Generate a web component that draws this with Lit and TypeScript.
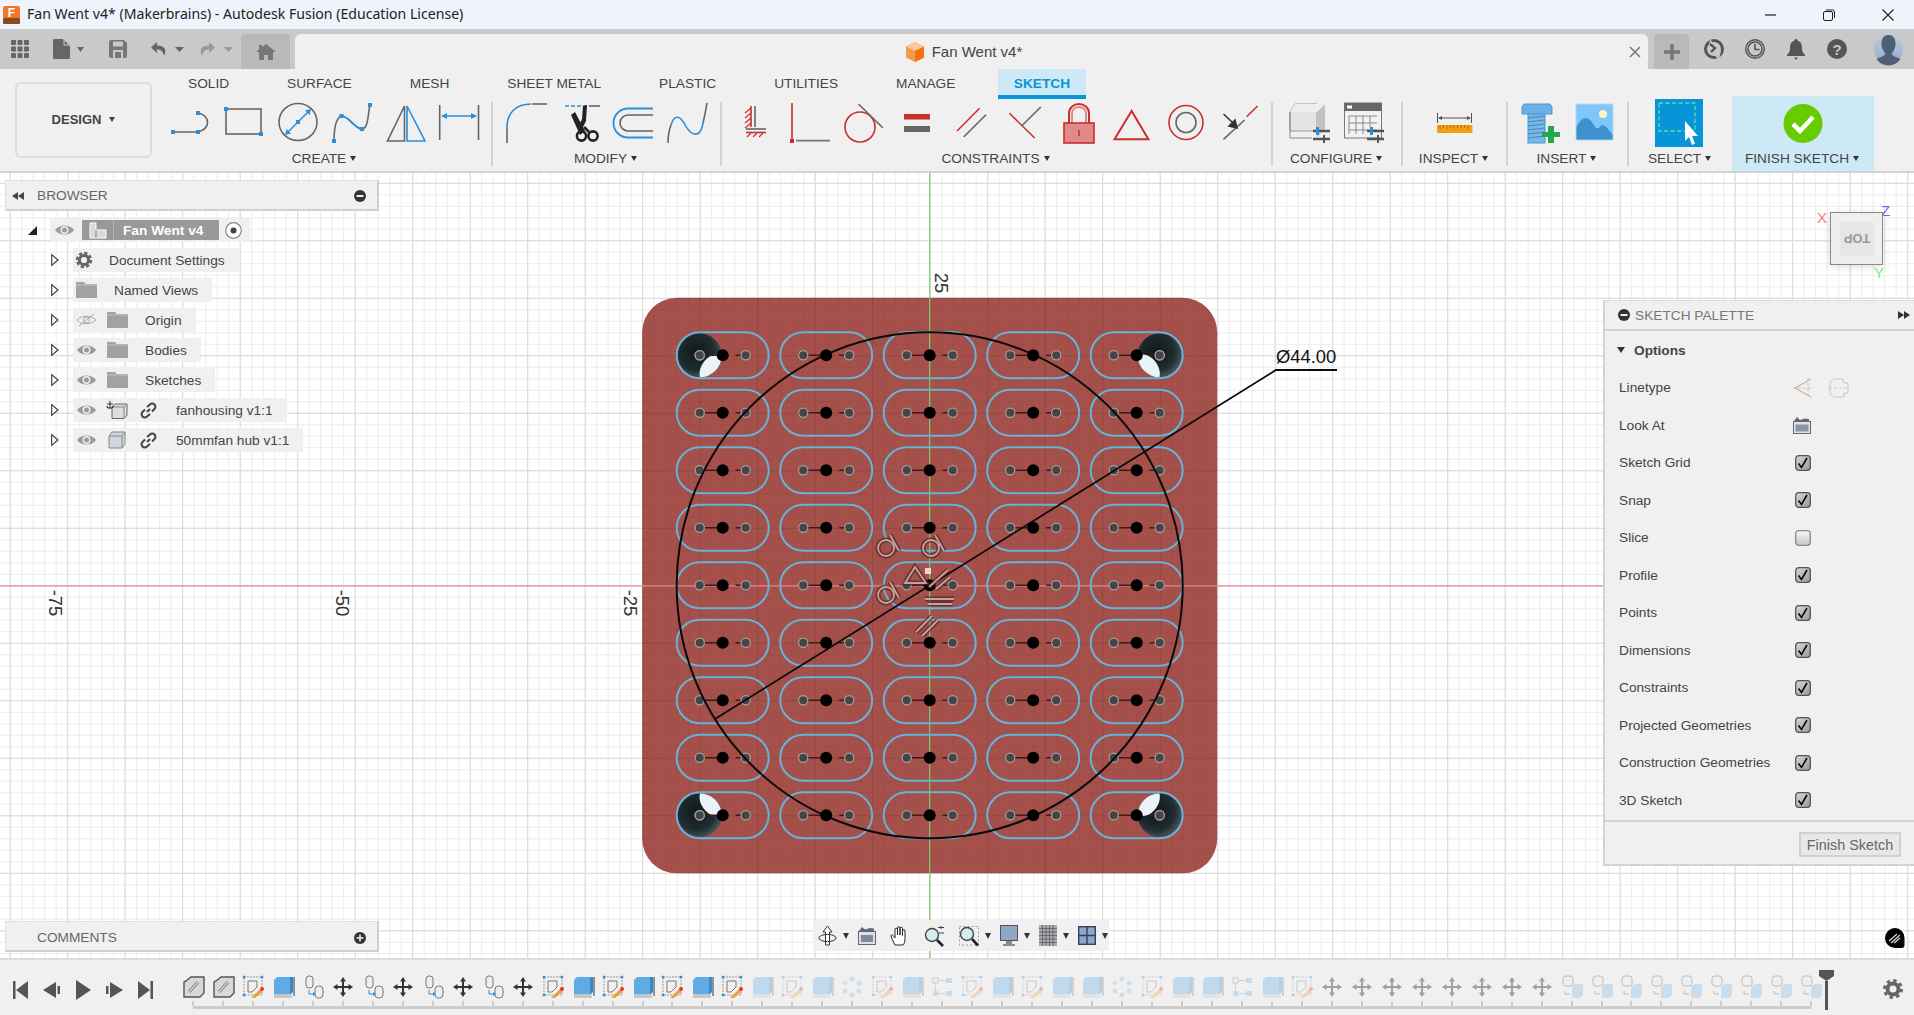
import { LitElement, html, svg, css } from 'lit';
import { customElement } from 'lit/decorators.js';

const GREY = '#666';
const BLUE = '#2a8fdc';
const RED = '#c9302c';

// 40x40 ribbon icons, drawn against the box they sit in
const sq = (x: number, y: number, c = BLUE, s = 4) => svg`<rect x=${x - s / 2} y=${y - s / 2} width=${s} height=${s} fill=${c}/>`;
const ln = (d: string, c = GREY, w = 1.6) => svg`<path d=${d} fill="none" stroke=${c} stroke-width=${w}/>`;

const ICONS: Record<string, any> = {
    line: svg`${ln('M2 29H27A13 10 0 0 0 27 9.7')}${sq(2, 29)}${sq(27, 29)}${sq(27, 10)}`,
    rect: svg`<rect x="2" y="6" width="35" height="25" fill="none" stroke=${GREY} stroke-width="1.6"/>${sq(2, 6)}${sq(37, 31)}`,
    circle: svg`<ellipse cx="20" cy="19" rx="19" ry="18.5" fill="none" stroke=${GREY} stroke-width="1.6"/>${ln('M10 29L30 9', BLUE)}
        <path d="M7 32l1.5-6 4.5 4.5zM33 6l-1.5 6-4.5-4.5z" fill=${BLUE}/>${sq(20, 19)}`,
    spline: svg`${ln('M2 38C2 25 4 15 9.5 13C16 12 23 26 30 26C36 26 36 12 38 1')}${ln('M9.5 13C16 12 23 26 30 26', BLUE)}${sq(2, 38)}${sq(9.5, 13)}${sq(30, 26)}${sq(38, 2)}`,
    mirror: svg`${ln('M18.5 3L1.5 38H18.5Z')}${ln('M21 3L39 38H21Z', BLUE)}`,
    dim: svg`${ln('M.7 2V37M39.5 2V37')}${ln('M3 13H37', BLUE)}<path d="M2 13l6-3v6zM38 13l-6-3v6z" fill=${BLUE}/>`,
    fillet: svg`${ln('M1 24V40')}${ln('M26 1H41')}${ln('M1 24C1 10 10 1 25 1', BLUE)}`,
    scissors: svg`<path d="M5 3H27" stroke=${BLUE} stroke-width="1.4" stroke-dasharray="4 2" fill="none"/>${ln('M29 3H40')}
        <path d="M11 12L15 9L25 28L20 32ZM23 3L27 2L26 18L21 28L18 25L22 16Z" fill="#222"/>
        <circle cx="21.5" cy="33" r="4.6" fill="none" stroke="#222" stroke-width="2.6"/><circle cx="33" cy="33" r="4.6" fill="none" stroke="#222" stroke-width="2.6"/>
        <path d="M24 24L29 29" stroke="#222" stroke-width="2.6"/>`,
    offset: svg`${ln('M40 5.5H15A14.5 14.5 0 0 0 15 34.5H40', BLUE, 1.8)}${ln('M40 12H15A8 8 0 0 0 15 28H40')}`,
    spline2: svg`${ln('M1 40C1 32 2 27 4 22M36 20C38 12 39 5 40 0')}${ln('M4 22C7 12 12 12 17 20C21 28 25 32 30 31C33 30 35 26 36 20', BLUE)}`,
    fix: svg`${ln('M15 3V24', RED)}${ln('M19 3V24')}${ln('M10 26H30')}${ln('M10 29.5H30', RED)}
        ${ln('M9 10L15 5M9 15L15 10M9 20L15 15M9 25L15 20M11 34L15 30M17 34L21 30M23 34L27 30', RED, 1.2)}`,
    coincident: svg`${ln('M2 0V36', RED)}${sq(2, 38, RED)}${ln('M6 37.6H40', '#777', 1.8)}`,
    tangent: svg`<circle cx="16" cy="24" r="15" fill="none" stroke=${RED} stroke-width="1.6"/>${ln('M14.5 1L39 25')}`,
    equal: svg`<rect x="7" y="11" width="26" height="5.5" fill=${RED}/><rect x="7" y="23" width="26" height="6" fill=${GREY}/>`,
    parallel: svg`${ln('M6 28L28.6 5.3', RED)}${ln('M12.7 34L35 11.7')}`,
    perp: svg`${ln('M4.4 10.3L29.7 35', RED)}${ln('M16.6 23L35.8 4')}`,
    lock: svg`<path d="M10 20V10A10 9 0 0 1 30 10V20" fill="none" stroke=${RED} stroke-width="2"/><path d="M13 20V10A7 6 0 0 1 27 10V20" fill="none" stroke="#e08a8a" stroke-width="2"/>
        <rect x="5" y="20" width="30" height="20" fill="#e08a8a" stroke=${RED} stroke-width="1.6"/><path d="M20 27V33" stroke="#a33" stroke-width="1.4"/>`,
    triangle: svg`<path d="M19.6 8L2.5 36.3H36.4Z" fill="none" stroke=${RED} stroke-width="2"/>`,
    concentric: svg`<circle cx="20" cy="19.5" r="17" fill="none" stroke=${RED} stroke-width="1.6"/><circle cx="20" cy="19.5" r="10" fill="none" stroke=${GREY} stroke-width="1.6"/>`,
    midpoint: svg`${ln('M3.4 36.3L24.6 17')}${ln('M26.6 13.7L37.6 3', RED)}<path d="M3.5 11L12 19M17 25L9 23L15 17Z" stroke="#333" stroke-width="1.6" fill="#333"/>`,
    cube: svg`<path d="M0 9L5 1H27V28H0Z" fill="#e4e4e4" stroke="#999"/><path d="M27 1H35V4V26L27 34Z" fill="#c2c2c2"/><path d="M0 9H27L35 1H5Z" fill="#eee"/><path d="M0 9V35H22" fill="none" stroke="#888"/>
        <path d="M23 28H40M23 36H40" stroke="#555" stroke-width="2.6"/><rect x="26" y="24" width="3" height="8" fill=${BLUE}/><rect x="33" y="32" width="2" height="8" fill="#555"/>`,
    table: svg`<rect x=".5" y="0" width="37" height="35" fill="#f2f2f2" stroke="#777"/><rect x=".5" y="0" width="37" height="8" fill="#666"/><rect x="3" y="2.5" width="5" height="3" fill="#fff"/>
        ${ln('M5 13H33M5 20H33M5 27H33M5 13V31M12 13V31M19 13V31M26 13V24', '#888', 1)}
        <path d="M23 28H40M23 36H40" stroke="#555" stroke-width="2.6"/><rect x="26" y="24" width="3" height="8" fill=${BLUE}/><rect x="33" y="32" width="2" height="8" fill="#555"/>`,
    ruler: svg`<rect x="2" y="22" width="35.5" height="8" fill="#f0a010"/>${ln('M5 22V26M8.5 22V25M12 22V26M15.5 22V25M19 22V26M22.5 22V25M26 22V26M29.5 22V25M33 22V26', '#b87000', 1)}
        ${ln('M2.5 10V20M36.5 10V20', '#555', 1)}${ln('M4 15H35', '#555', 1)}<path d="M3 15l4-2v4zM36 15l-4-2v4z" fill="#555"/>`,
    bolt: svg`<path d="M3 1H29L31 4V11H1V4Z" fill="#6db1e6" stroke="#4b97d2"/><rect x="7" y="11" width="17" height="29" fill="#79b7e6" stroke="#4b97d2"/>
        ${ln('M7 15L24 13M7 19L24 17M7 23L24 21M7 27L24 25M7 31L24 29M7 35L24 33', '#3f88c4', 1.2)}<path d="M27 23H33V29H39V34H33V40H27V34H21V29H27Z" fill="#22a84f"/>`,
    image: svg`<rect x="2" y="1" width="37" height="36" fill="#80c6f8" stroke="#b6daf4"/><path d="M2.5 36.5V24C7 15 12 12 17 18C20 22 22 27 25 25C28 20 32 22 38.5 32V36.5Z" fill="#3d91cd"/><circle cx="29" cy="11" r="4" fill="#fdf4c2"/>`,
    check: svg`<ellipse cx="20" cy="19.5" rx="19.5" ry="19.5" fill="#66cc00"/><path d="M10 20L17 27L30 13" fill="none" stroke="#fff" stroke-width="4.6"/>`,
};

const TOOLS: [string, string[], number][] = [
    ['CREATE', ['line', 'rect', 'circle', 'spline', 'mirror', 'dim'], 334],
    ['MODIFY', ['fillet', 'scissors', 'offset', 'spline2'], 229],
    ['CONSTRAINTS', ['fix', 'coincident', 'tangent', 'equal', 'parallel', 'perp', 'lock', 'triangle', 'concentric', 'midpoint'], 551],
    ['CONFIGURE', ['cube', 'table'], 130],
    ['INSPECT', ['ruler'], 105],
    ['INSERT', ['bolt', 'image'], 121],
];

const PALETTE: [string, boolean][] = [
    ['Sketch Grid', true], ['Snap', true], ['Slice', false], ['Profile', true], ['Points', true], ['Dimensions', true],
    ['Constraints', true], ['Projected Geometries', true], ['Construction Geometries', true], ['3D Sketch', true],
];

// timeline: L link, S sketch, E extrude, J joint, M move; lower case is past the marker, c and r are patterns
const SEQ = 'LLSEJMJMJMJMSESESES' + 'esecsersesee' + 'csee' + 'res' + 'mmmmmmmm' + 'jjjjjjjjj';

const tlIcon = (k: string): any => {
    if (k === 'L') return svg`<path d="M5 5L10 1H23V17L19 21H3V6Z" fill="#d8d8d8" stroke="#555" stroke-width="1.4"/><path d="M8 16L17 6" stroke="#777" stroke-width="3" fill="none"/><path d="M8 16L17 6" stroke="#ddd" stroke-width="1.2"/>`;
    if (k === 'J') return svg`<rect x="5" y="0" width="7" height="12" rx="3" fill="#eee" stroke="#777"/><rect x="14" y="10" width="8" height="12" rx="3.5" fill="#eee" stroke="#777"/><path d="M8 14V18H13" stroke=${BLUE} fill="none"/><path d="M15 18l-3-2v4z" fill=${BLUE}/>`;
    if (k === 'M') return svg`<path d="M12 1L15 5.5H13V10H17.5V8L22 11L17.5 14V12H13V16.5H15L12 21L9 16.5H11V12H6.5V14L2 11L6.5 8V10H11V5.5H9Z" fill="#333"/>`;
    if (k === 'S') return svg`<rect x="3" y="1" width="18" height="18" fill="none" stroke="#999" stroke-dasharray="2 1"/>${sq(3, 1, BLUE, 2.4)}${sq(21, 1, BLUE, 2.4)}${sq(3, 19, BLUE, 2.4)}
        <path d="M7 5H16V11L11 16H7Z" fill="none" stroke="#777"/><path d="M11 21L19 13L22 15L14 22L10 22Z" fill="#e9a23b"/><circle cx="21" cy="13" r="2" fill="#e8342e"/>`;
    if (k === 'E') return svg`<path d="M3 4L6 1H19V18H3Z" fill="#5fabe4"/><path d="M19 1L22 1V16L19 19Z" fill="#3d88c6"/><path d="M3 18H19L21 20V22H3Z" fill="#c7c7c7"/><path d="M23 20V1" stroke="#333"/>`;
    if (k === 'c') return svg`<g fill="#8cbde3"><circle cx="12" cy="3" r="2.5"/><circle cx="19" cy="7" r="2.5"/><circle cx="19" cy="15" r="2.5"/><circle cx="12" cy="19" r="2.5"/><circle cx="5" cy="7" r="1.5" fill="none" stroke="#888"/><circle cx="5" cy="15" r="2.5"/></g>`;
    if (k === 'r') return svg`<rect x="3" y="2" width="5" height="5" fill="none" stroke="#888"/><rect x="16" y="2" width="6" height="5" fill="#6db1e6"/><rect x="3" y="15" width="5" height="5" fill="#6db1e6"/><rect x="16" y="15" width="6" height="5" fill="#6db1e6"/><path d="M8 4.5H16M5.5 7V15M8 17.5H16" stroke="#999" fill="none"/>`;
    if (k === 'j') return svg`<rect x="3" y="0" width="10" height="10" rx="3" fill="#eee" stroke="#555"/><path d="M5 15V18H10" stroke="#555" fill="none"/><path d="M15 8H23V19L20 22H12V11Z" fill="#7fb6e0"/>`;
    return tlIcon(k.toUpperCase());
};

const slot = (x: number, y: number) => svg`
    <rect x=${x - 46} y=${y - 23} width="92" height="46" rx="23" fill="none" stroke="#66b4da" stroke-width="2"/>
    <path d="M${x - 20} ${y}H${x}M${x + 13} ${y}H${x + 19}" stroke="#3d1c1a" stroke-width="1.4" fill="none"/>
    <circle cx=${x - 23} cy=${y} r="4.6" fill="#454545" stroke="#a3a3a3" stroke-width="1.2"/>
    <circle cx=${x + 23} cy=${y} r="4.6" fill="#454545" stroke="#a3a3a3" stroke-width="1.2"/>`;

// the four screw holes, highlight turned towards the middle of the plate
const hole = (x: number, y: number, sx: number, sy: number, id: string) => svg`
    <clipPath id=${id}><circle cx=${x} cy=${y} r="22"/></clipPath>
    <circle cx=${x} cy=${y} r="22" fill="url(#ball)"/>
    <g clip-path="url(#${id})">
        <ellipse cx=${x + 13 * sx} cy=${y + 14 * sy} rx="11.5" ry="16" fill="#eaf3f7" transform=${`rotate(${sx * sy * 35} ${x + 13 * sx} ${y + 14 * sy})`}/>
    </g>
    <circle cx=${x} cy=${y} r="4.6" fill="#454545" stroke="#a3a3a3" stroke-width="1.2"/>`;

const glyph = (d: string) => svg`<path d=${d} fill="none" stroke="#4a2826" stroke-width="5" opacity=".7"/><path d=${d} fill="none" stroke="#d8aaa5" stroke-width="1.8" opacity=".9"/>`;

const eye = (off = false) => html`<svg class="ic21" width="21" height="14" viewBox="0 0 21 14">
    ${off
        ? svg`<path d="M1 7C5 2 15 2 20 7C15 12 5 12 1 7Z" fill="none" stroke="#aaa"/><circle cx="10.5" cy="7" r="3" fill="none" stroke="#aaa"/><path d="M3 13L18 1" stroke="#aaa"/>`
        : svg`<path d="M1 7C5 1 16 1 20 7C16 13 5 13 1 7Z" fill="#9a9a9a"/><circle cx="10.5" cy="7" r="4" fill="#f0f0f0"/><circle cx="10.5" cy="7" r="2.5" fill="#9a9a9a"/>`}
</svg>`;
const folder = () => html`<svg class="ic21" width="21" height="16" viewBox="0 0 21 16"><path d="M0 0H8L9.5 2H21V16H0Z" fill="#a2a2a2"/><path d="M0 3H21" stroke="#ddd" stroke-width=".6"/></svg>`;
const link = () => html`<svg class="ic-link" width="17" height="17" viewBox="0 0 17 17"><path d="M7 10L10 7" stroke="#444" stroke-width="2"/><path d="M7 5L10 2.5A3 3 0 0 1 14.5 7L12 9.5M10 12L7 14.5A3 3 0 0 1 2.5 10L5 7.5" fill="none" stroke="#444" stroke-width="2"/></svg>`;
const chev = () => html`<svg class="chev" width="8" height="12" viewBox="0 0 8 12"><path d="M.7 .7L7 6L.7 11.3Z" fill="#fff" stroke="#333" stroke-width="1.1"/></svg>`;

@customElement('app-root')
export class AppRoot extends LitElement {
    static styles = css`
        :host {
            display: flex;
            flex-direction: column;
            width: 1914px;
            height: 1015px;
            overflow: hidden;
            font-family: "Liberation Sans", Arial, sans-serif;
            font-size: 13.7px;
            color: #444;
            background: #fff;
        }
        svg { display: block; flex: none; overflow: visible; }

        .titlebar { display: flex; align-items: center; height: 29px; background: #eff3fb; padding-left: 3px; }
        .titlebar .name { margin: -2px 0 0 7px; font-family: "Noto Sans", sans-serif; font-size: 14.1px; color: #222; }
        .winbtns { display: flex; align-items: center; margin-left: auto; margin-right: 20px; gap: 47px; }

        .tabbar { display: flex; align-items: flex-end; height: 40px; background: #c9c9c9; }
        .tabbar > svg { align-self: center; }
        .tabbar .m5 { margin-left: 5px; } .tabbar .m6 { margin-left: 6px; } .tabbar .m7 { margin-left: 7px; }
        .tabbar .m8 { margin-left: 8px; } .tabbar .m9 { margin-left: 9px; } .tabbar .m11 { margin-left: 11px; }
        .tabbar .m15 { margin-left: 15px; } .tabbar .m21 { margin-left: 21px; } .tabbar .m22 { margin-left: 22px; }
        .tabbar .m24 { margin-left: 24px; } .tabbar .m25 { margin-left: 25px; } .tabbar .m27 { margin-left: 27px; }
        .home, .plus { display: flex; align-items: center; justify-content: center; height: 35px; background: #b9b9b9; border-radius: 4px 4px 0 0; }
        .home { width: 49px; } .plus { width: 35px; }
        .doctab {
            display: grid; grid-template-columns: 1fr auto 1fr; align-items: center;
            width: 1353px; height: 35px; box-sizing: border-box; padding-right: 15px;
            background: #f0f0f0; border-radius: 6px 6px 0 0;
        }
        .doctab .center { grid-column: 2; display: flex; align-items: center; gap: 8px; font-size: 15px; }
        .doctab .x { justify-self: end; margin-right: -8px; }

        .ribbon { display: flex; height: 102px; background: #f0f0f0; border-bottom: 2px solid #d2d2d2; }
        .design {
            display: flex; align-items: center; justify-content: center; gap: 8px;
            width: 137px; height: 76px; box-sizing: border-box; margin: 13px 7px 0 15px; padding-bottom: 2px;
            border: 2px solid #dcdcdc; border-radius: 6px; font-weight: bold; font-size: 13px;
        }
        .caret { width: 0; height: 0; border: 3.5px solid transparent; border-top: 5px solid #444; border-bottom: 0; flex: none; }
        .tabs { display: flex; height: 29px; padding-left: 29px; gap: 58px; align-items: flex-start; }
        .tabs span { line-height: 29px; white-space: nowrap; }
        .tabs .active {
            margin-left: -15.6px; padding: 0 16px; height: 29.5px; box-sizing: border-box;
            background: #cce9f5; border-bottom: 4px solid #0696d7; color: #0696d7; font-weight: bold;
        }
        .groups { display: flex; margin-top: 4px; height: 64px; }
        .group {
            display: flex; flex-direction: column; align-items: center; box-sizing: border-box;
            height: 64px; border-right: 2px solid #d2d2d2;
        }
        .group:nth-child(3) { padding-left: 3px; }
        .icons { display: flex; gap: 13.7px; height: 40px; margin-top: 1px; }
        .label { display: flex; align-items: center; gap: 4px; height: 16px; margin: 7px 2px 0 0; white-space: nowrap; }
        .group:nth-child(3) .label { margin-left: -3px; }
        .label .caret { border-top-color: #333; }
        .select { width: 103px; border-right: 0; }
        .select .icons { margin: -3px 0 0 -3px; height: 48px; }
        .select .label { margin-top: 3px; }
        .finish { width: 142px; height: 75px; margin-top: -6px; padding-top: 7px; border-right: 0; background: #cce9f5; }
        .finish .icons { margin-top: 1px; }
        .finish .label { margin-top: 6px; }

        .canvas { position: relative; flex: 1; min-height: 0; background: #fff; overflow: hidden; }
        .canvas > .scene { position: absolute; left: 0; top: 0; }

        .panel {
            display: flex; align-items: center; box-sizing: border-box; height: 31px; width: 374px; padding-top: 1px;
            background: #f0f0f0; border: 1px solid #dedede; border-right: 2px solid #cfcfcf; border-bottom: 2px solid #cfcfcf;
            color: #666;
        }
        .browser { position: absolute; left: 5px; top: 7px; }
        .browser .panel svg:first-child { margin-left: 6px; }
        .browser .panel span { margin-left: 13px; }
        .end { margin-left: auto; margin-right: 11px; }
        .tree { padding-top: 7px; }
        .row { display: flex; align-items: center; height: 24px; margin-bottom: 6px; padding-left: 46px; }
        .chev { margin-right: 14px; }
        .pill { display: flex; align-items: center; height: 24px; padding: 0 14px 0 3px; background: #f0f0f0; white-space: nowrap; }
        .ic21 { width: 21px; }
        .ic21 + .ic21 { margin-left: 10px; }
        .ic-link { margin-left: 12px; }
        .pill .txt { margin-left: 17px; }
        .pill .ic-link + .txt { margin-left: 19px; }
        .root { padding-left: 23px; }
        .root .rootchev { margin-right: 13px; }
        .root .pill { width: 200px; box-sizing: border-box; padding: 0 0 0 4px; }
        .selblock { display: flex; align-items: center; width: 137px; height: 20px; margin-left: 7px; background: #999; color: #fff; font-weight: bold; }
        .selblock .cell { display: flex; align-items: center; justify-content: center; width: 31px; height: 20px; border-right: 1px solid #b5b5b5; }
        .selblock span { margin-left: 9px; }
        .radio { margin-left: 6px; }

        .comments { position: absolute; left: 5px; top: 748px; padding-top: 3px; }
        .comments span { margin-left: 31px; }

        .palette {
            position: absolute; left: 1603px; top: 127px; width: 311px; height: 566px; box-sizing: border-box;
            background: #f0f0f0; border-left: 2px solid #d2d2d2; border-top: 1px solid #d8d8d8; border-bottom: 2px solid #d2d2d2;
        }
        .phead { display: flex; align-items: center; height: 30px; border-bottom: 2px solid #d2d2d2; color: #777; padding-left: 13px; box-sizing: border-box; }
        .phead span { margin-left: 5px; }
        .phead .end { margin-right: 4px; }
        .opts { display: flex; align-items: center; height: 38px; padding-left: 12px; font-weight: bold; gap: 9px; }
        .opts .caret { border-width: 6px 4px 0; border-top-color: #333; }
        .prow { display: grid; grid-template-columns: 160px auto auto; justify-content: start; align-items: center; height: 37.5px; padding-left: 14px; column-gap: 16px; }
        .prow span { white-space: nowrap; }
        .prow .nudge { margin-left: -2px; }
        .pfoot { display: flex; justify-content: flex-end; margin-top: 1px; padding-top: 10px; border-top: 2px solid #d2d2d2; padding-right: 13px; }
        .pfoot div { display: flex; align-items: center; justify-content: center; width: 102px; height: 25px; box-sizing: border-box; background: #e8e8e8; border: 2px solid #d0d0d0; color: #666; font-size: 14.4px; }

        .cube { position: absolute; left: 1830px; top: 39px; width: 53px; height: 53px; box-sizing: border-box; background: #efefef; border: 1px solid #888; display: flex; align-items: center; justify-content: center; box-shadow: 0 2px 8px rgba(0, 0, 0, .12); }
        .cube div { width: 34px; height: 34px; background: #e6e6e6; display: flex; align-items: center; justify-content: center; font-size: 13px; font-weight: bold; color: #999; transform: rotate(180deg); }
        .axis { position: absolute; font-size: 15px; line-height: 15px; }
        .axis.ax { left: 1817px; top: 37px; color: #f47f85; }
        .axis.az { left: 1881px; top: 30px; color: #6a6cf0; }
        .axis.ay { left: 1874px; top: 92px; color: #84e884; }

        .nav {
            position: absolute; left: 813px; top: 747px; width: 296px; height: 31px; box-sizing: border-box; padding-left: 5px;
            display: flex; align-items: center; background: #f0f0f0;
        }
        .nav .caret { border-width: 6px 3.5px 0; border-top-color: #333; margin-left: 6px; }
        .nav svg { margin-left: 14px; }
        .nav svg:first-child { margin-left: 0; }
        .nav .caret + svg { margin-left: 9px; }
        .drop { position: absolute; left: 1885px; top: 755px; }

        .timeline {
            display: flex; align-items: flex-start; height: 57px; box-sizing: border-box; background: #f0f0f0;
            border-top: 2px solid #dcdcdc;
        }
        .transport { display: flex; align-items: center; gap: 15.3px; width: 178px; height: 22px; padding-left: 13px; margin-top: 19px; flex: none; box-sizing: border-box; }
        .track { display: flex; flex: none; padding-top: 16px; }
        .item { display: flex; flex-direction: column; align-items: center; width: 29.98px; }
        .item.faded svg { opacity: .32; }
        .item.greyed svg { opacity: .42; }
        .tick { width: 2px; height: 5px; margin-top: 3px; background: #ccc; }
        .rail { align-self: stretch; height: 3px; background: #ccc; }
        .item:first-child .rail { margin-left: 50%; }
        .item:last-child .rail { margin-right: 50%; }
        .playhead { display: flex; flex-direction: column; align-items: center; flex: none; width: 15px; margin: 10px 0 0 -7px; }
        .playhead i { display: block; width: 3px; height: 29px; background: #555; }
        .gear { margin-left: auto; margin-right: 11px; margin-top: 19px; }
    `;

    render() {
        const rows = [];
        const dots = [];
        for (let r = -4; r <= 4; r++) {
            for (let c = -2; c <= 2; c++) {
                const x = 929.7 + c * 103.5;
                const y = 585.3 + r * 57.5;
                rows.push(slot(x, y));
                dots.push(svg`<circle cx=${x} cy=${y} r="6" fill="#000"/>`);
            }
        }
        const scene = html`<svg class="scene" width="1914" height="785" viewBox="0 173 1914 785">
            <defs>
                <pattern id="minor" patternUnits="userSpaceOnUse" x="929.7" y="585.3" width="11.5" height="11.5">
                    <path d="M0 0H11.5M0 0V11.5" stroke="#ebebeb" stroke-width="2" fill="none"/>
                </pattern>
                <pattern id="major" patternUnits="userSpaceOnUse" x="929.7" y="585.3" width="57.5" height="57.5">
                    <path d="M0 0H57.5M0 0V57.5" stroke="#dadada" stroke-width="2" fill="none"/>
                </pattern>
                <pattern id="pminor" patternUnits="userSpaceOnUse" x="929.7" y="585.3" width="11.5" height="11.5">
                    <path d="M0 0H11.5M0 0V11.5" stroke="#000" stroke-opacity=".05" stroke-width="1.5" fill="none"/>
                </pattern>
                <pattern id="pmajor" patternUnits="userSpaceOnUse" x="929.7" y="585.3" width="57.5" height="57.5">
                    <path d="M0 0H57.5M0 0V57.5" stroke="#000" stroke-opacity=".09" stroke-width="1.5" fill="none"/>
                </pattern>
                <radialGradient id="ball" cx=".42" cy=".42" r=".6">
                    <stop offset="0" stop-color="#10181b"/><stop offset=".7" stop-color="#1f2c30"/><stop offset="1" stop-color="#46555a"/>
                </radialGradient>
            </defs>
            <rect y="173" width="1914" height="785" fill="url(#minor)"/>
            <rect y="173" width="1914" height="785" fill="url(#major)"/>
            <rect x="642.2" y="297.8" width="575" height="575.5" rx="34.5" fill="#a5504a"/>
            <rect x="642.2" y="297.8" width="575" height="575.5" rx="34.5" fill="url(#pminor)"/>
            <rect x="642.2" y="297.8" width="575" height="575.5" rx="34.5" fill="url(#pmajor)"/>
            <path d="M0 585.8H1914" stroke="#e98b8b" stroke-width="1.2"/>
            <path d="M929.7 173V958" stroke="#85cf6f" stroke-width="1.2"/>
            ${hole(699.7, 355.3, 1, 1, 'h1')}${hole(1159.7, 355.3, -1, 1, 'h2')}${hole(699.7, 815.3, 1, -1, 'h3')}${hole(1159.7, 815.3, -1, -1, 'h4')}
            ${rows}
            <circle cx="929.7" cy="585.3" r="253" fill="none" stroke="#0a0a0a" stroke-width="2"/>
            <path d="M1337 370H1276L715 719" fill="none" stroke="#0a0a0a" stroke-width="1.8"/>
            ${dots}
            ${glyph('M894 548A8 8 0 1 1 878 548A8 8 0 1 1 894 548M890 535L899 551')}
            ${glyph('M939 548A8 8 0 1 1 923 548A8 8 0 1 1 939 548M935 535L944 551')}
            ${glyph('M894 595A8 8 0 1 1 878 595A8 8 0 1 1 894 595M890 582L899 598')}
            ${glyph('M915 567L905 583H926Z')}
            ${glyph('M929 587L948 570M936 589L950 577')}
            ${glyph('M916 632L932 616M922 636L938 620')}
            ${glyph('M925 599H954M928 604H952')}
            <rect x="925" y="568" width="6" height="6" fill="#f0d6d2"/>
            <text x="1276" y="363" font-family="Liberation Sans" font-size="18.4" fill="#111">Ø44.00</text>
            ${[['-75', 55], ['-50', 342], ['-25', 630]].map(
                ([t, x]) => svg`<text transform=${`translate(${x} 603) rotate(90)`} text-anchor="middle" dominant-baseline="central" font-family="Liberation Sans" font-size="18.5" fill="#333">${t}</text>`
            )}
            <text transform="translate(941 283) rotate(90)" text-anchor="middle" dominant-baseline="central" font-family="Liberation Sans" font-size="18.5" fill="#333">25</text>
        </svg>`;

        return html`
            <div class="titlebar">
                <svg width="17" height="18" viewBox="0 0 17 18">
                    <rect width="17" height="13" rx="2" fill="#f0772a"/><rect y="12" width="17" height="6" rx="1" fill="#8a4a1c"/>
                    <text x="8.5" y="11" text-anchor="middle" font-family="Liberation Sans" font-weight="bold" font-size="12" fill="#fff">F</text>
                </svg>
                <span class="name">Fan Went v4* (Makerbrains) - Autodesk Fusion (Education License)</span>
                <div class="winbtns">
                    <svg width="11" height="2" viewBox="0 0 11 2"><path d="M0 1H11" stroke="#222" stroke-width="1.2"/></svg>
                    <svg width="12" height="12" viewBox="0 0 12 12"><rect x=".5" y="2.5" width="9" height="9" rx="1.5" fill="none" stroke="#222"/><path d="M3 1H9.5A2 2 0 0 1 11.5 3V9" fill="none" stroke="#222"/></svg>
                    <svg width="12" height="12" viewBox="0 0 12 12"><path d="M.5 .5L11.5 11.5M11.5 .5L.5 11.5" stroke="#222" stroke-width="1.1"/></svg>
                </div>
            </div>

            <div class="tabbar">
                <svg class="m11" width="18" height="18" viewBox="0 0 18 18" fill="#666"><rect width="5" height="5" rx="1"/><rect x="6.5" width="5" height="5" rx="1"/><rect x="13" width="5" height="5" rx="1"/><rect y="6.5" width="5" height="5" rx="1"/><rect x="6.5" y="6.5" width="5" height="5" rx="1"/><rect x="13" y="6.5" width="5" height="5" rx="1"/><rect y="13" width="5" height="5" rx="1"/><rect x="6.5" y="13" width="5" height="5" rx="1"/><rect x="13" y="13" width="5" height="5" rx="1"/></svg>
                <svg class="m24" width="17" height="20" viewBox="0 0 17 20"><path d="M1 0H10L17 7V19A1 1 0 0 1 16 20H1A1 1 0 0 1 0 19V1A1 1 0 0 1 1 0Z" fill="#666"/><path d="M11 0V6H17" fill="none" stroke="#c9c9c9"/></svg>
                <svg class="m7" width="7" height="5" viewBox="0 0 7 5"><path d="M0 0H7L3.5 5Z" fill="#666"/></svg>
                <svg class="m25" width="18" height="18" viewBox="0 0 18 18"><path d="M2 0H15L18 3V16A2 2 0 0 1 16 18H2A2 2 0 0 1 0 16V2A2 2 0 0 1 2 0Z" fill="#777"/><rect x="4" y="1.5" width="10" height="5" fill="#c9c9c9"/><rect x="4" y="10" width="10" height="8" fill="#c9c9c9"/><rect x="6" y="12" width="6" height="6" fill="#777"/></svg>
                <svg class="m24" width="16" height="14" viewBox="0 0 16 14"><path d="M6 0L0 5.5L6 11V7.5C10 7.5 12 9 13 14C16 8 14 3.5 6 3.5Z" fill="#666"/></svg>
                <svg class="m8" width="9" height="5" viewBox="0 0 9 5"><path d="M0 0H9L4.5 5Z" fill="#666"/></svg>
                <svg class="m15" width="16" height="14" viewBox="0 0 16 14"><path d="M10 0L16 5.5L10 11V7.5C6 7.5 4 9 3 14C0 8 2 3.5 10 3.5Z" fill="#999"/></svg>
                <svg class="m9" width="9" height="5" viewBox="0 0 9 5"><path d="M0 0H9L4.5 5Z" fill="#999"/></svg>
                <div class="home m8">
                    <svg width="20" height="16" viewBox="0 0 20 16"><path d="M10 0L20 8H17V16H12V11H8V16H3V8H0L3 5.5V1H6V3Z" fill="#777"/></svg>
                </div>
                <div class="doctab m5">
                    <div class="center">
                        <svg width="18" height="20" viewBox="0 0 18 20"><path d="M9 0L18 4.5V15.5L9 20L0 15.5V4.5Z" fill="#f69a4a"/><path d="M9 0L18 4.5L9 9L0 4.5Z" fill="#fcc89a"/><path d="M18 4.5V15.5L9 20V9Z" fill="#f4730f"/></svg>
                        <span>Fan Went v4*</span>
                    </div>
                    <svg class="x" width="12" height="12" viewBox="0 0 12 12"><path d="M1 1L11 11M11 1L1 11" stroke="#777" stroke-width="1.5"/></svg>
                </div>
                <div class="plus m6">
                    <svg width="16" height="16" viewBox="0 0 16 16"><path d="M8 0V16M0 8H16" stroke="#777" stroke-width="3.5"/></svg>
                </div>
                <svg class="m15" width="20" height="20" viewBox="0 0 20 20"><circle cx="10" cy="10" r="8.5" fill="none" stroke="#555" stroke-width="3"/><path d="M6 0L12 8L6 13L5 7ZM12 8L7 14L15 20L17 12Z" fill="#c9c9c9"/><path d="M6 5L11 9L7 13" fill="none" stroke="#555" stroke-width="2.4"/></svg>
                <svg class="m21" width="20" height="20" viewBox="0 0 20 20"><circle cx="10" cy="10" r="9.3" fill="none" stroke="#555" stroke-width="1.4"/><circle cx="10" cy="10" r="7" fill="none" stroke="#555" stroke-width="1.6"/><path d="M10 5V10.5H14.5" fill="none" stroke="#555" stroke-width="1.6"/></svg>
                <svg class="m22" width="18" height="21" viewBox="0 0 18 21"><path d="M9 0A2 2 0 0 1 11 2C15 3 15 7 15 10C15 13 17 15 18 16V17H0V16C1 15 3 13 3 10C3 7 3 3 7 2A2 2 0 0 1 9 0Z" fill="#555"/><path d="M7 18.5H11L9 21Z" fill="#555"/></svg>
                <svg class="m22" width="20" height="20" viewBox="0 0 20 20"><circle cx="10" cy="10" r="10" fill="#555"/><text x="10" y="15.5" text-anchor="middle" font-family="Liberation Sans" font-weight="bold" font-size="15" fill="#c9c9c9">?</text></svg>
                <svg class="m27" width="29" height="30" viewBox="0 0 29 30">
                    <defs><linearGradient id="av" x1="0" y1="0" x2="0" y2="1"><stop offset="0" stop-color="#bccde0"/><stop offset="1" stop-color="#93a9c4"/></linearGradient></defs>
                    <ellipse cx="14.5" cy="15" rx="14.5" ry="15" fill="url(#av)"/>
                    <path d="M14.5 1C20 1 22 6 21.5 11C21 15 19 18 17.5 20C20 23 25 24 26.5 25A14.5 15 0 0 1 2.5 25C4 24 9 23 11.5 20C10 18 8 15 7.5 11C7 6 9 1 14.5 1Z" fill="#4f5f78"/>
                </svg>
            </div>

            <div class="ribbon">
                <div class="design">DESIGN <div class="caret"></div></div>
                <div>
                    <div class="tabs">
                        <span>SOLID</span><span>SURFACE</span><span>MESH</span><span>SHEET METAL</span><span>PLASTIC</span><span>UTILITIES</span><span>MANAGE</span><span class="active">SKETCH</span>
                    </div>
                    <div class="groups">
                        ${TOOLS.map(
                            ([name, icons, w]) => html`<div class="group" style="width:${w}px">
                                <div class="icons">${icons.map((i) => html`<svg width="40" height="40" viewBox="0 0 40 40">${ICONS[i]}</svg>`)}</div>
                                <div class="label">${name}<div class="caret"></div></div>
                            </div>`
                        )}
                        <div class="group select">
                            <div class="icons">
                                <svg width="48" height="48" viewBox="0 0 48 48">
                                    <rect width="48" height="48" fill="#0696d7"/>
                                    <rect x="4" y="4" width="36" height="28" fill="none" stroke="#63d9a8" stroke-width="1.3" stroke-dasharray="4 2.5"/>
                                    <path d="M30 22V42L34 38L37 46L40 44.5L37 37H43Z" fill="#fff"/>
                                </svg>
                            </div>
                            <div class="label">SELECT<div class="caret"></div></div>
                        </div>
                        <div class="group finish">
                            <div class="icons"><svg width="40" height="40" viewBox="0 0 40 40">${ICONS.check}</svg></div>
                            <div class="label">FINISH SKETCH<div class="caret"></div></div>
                        </div>
                    </div>
                </div>
            </div>

            <div class="canvas">
                ${scene}

                <div class="browser">
                    <div class="panel">
                        <svg width="12" height="8" viewBox="0 0 12 8"><path d="M0 4L6 0V8ZM6 4L12 0V8Z" fill="#444"/></svg>
                        <span>BROWSER</span>
                        <svg class="end" width="12" height="12" viewBox="0 0 12 12"><circle cx="6" cy="6" r="6" fill="#333"/><rect x="2.5" y="5" width="7" height="2" fill="#f0f0f0"/></svg>
                    </div>
                    <div class="tree">
                        <div class="row root">
                            <svg class="rootchev" width="9" height="9" viewBox="0 0 9 9"><path d="M9 0V9H0Z" fill="#222"/></svg>
                            <div class="pill">
                                ${eye()}
                                <div class="selblock">
                                    <div class="cell"><svg width="18" height="17" viewBox="0 0 18 17"><path d="M1 1H7V8H17V16H1Z" fill="#d8d8d8" stroke="#fff"/><path d="M7 8V16" stroke="#888"/></svg></div>
                                    <span>Fan Went v4</span>
                                </div>
                                <svg class="radio" width="17" height="17" viewBox="0 0 17 17"><circle cx="8.5" cy="8.5" r="7.8" fill="#fff" stroke="#888" stroke-width="1.2"/><circle cx="8.5" cy="8.5" r="3" fill="#444"/></svg>
                            </div>
                        </div>
                        <div class="row">
                            ${chev()}
                            <div class="pill">
                                <svg width="16" height="16" viewBox="0 0 16 16"><circle cx="8" cy="8" r="4.6" fill="none" stroke="#666" stroke-width="3"/><circle cx="8" cy="8" r="6.8" fill="none" stroke="#666" stroke-width="2.8" stroke-dasharray="3.2 2.14"/></svg>
                                <span class="txt">Document Settings</span>
                            </div>
                        </div>
                        <div class="row">${chev()}<div class="pill">${folder()}<span class="txt">Named Views</span></div></div>
                        <div class="row">${chev()}<div class="pill">${eye(true)}${folder()}<span class="txt">Origin</span></div></div>
                        <div class="row">${chev()}<div class="pill">${eye()}${folder()}<span class="txt">Bodies</span></div></div>
                        <div class="row">${chev()}<div class="pill">${eye()}${folder()}<span class="txt">Sketches</span></div></div>
                        <div class="row">
                            ${chev()}
                            <div class="pill">
                                ${eye()}
                                <svg class="ic21" width="21" height="18" viewBox="0 0 21 18"><path d="M5 6L8 3H20V14L17 17.5H5Z" fill="#ddd" stroke="#666"/><path d="M17 6V17.5M5 6H17L20 3" fill="none" stroke="#888"/><path d="M3 0V7M0 3H6M0 5C0 8 6 8 6 5" fill="none" stroke="#333" stroke-width="1.1"/></svg>
                                ${link()}
                                <span class="txt">fanhousing v1:1</span>
                            </div>
                        </div>
                        <div class="row">
                            ${chev()}
                            <div class="pill">
                                ${eye()}
                                <svg class="ic21" width="21" height="18" viewBox="0 0 21 18"><path d="M2 5L5 1H18V13L15 17H2Z" fill="#cfd6df" stroke="#888"/><path d="M15 5V17M2 5H15L18 1" fill="none" stroke="#888"/></svg>
                                ${link()}
                                <span class="txt">50mmfan hub v1:1</span>
                            </div>
                        </div>
                    </div>
                </div>

                <div class="panel comments">
                    <span>COMMENTS</span>
                    <svg class="end" width="12" height="12" viewBox="0 0 12 12"><circle cx="6" cy="6" r="6" fill="#333"/><path d="M2.5 6H9.5M6 2.5V9.5" stroke="#f0f0f0" stroke-width="1.6"/></svg>
                </div>

                <span class="axis ax">X</span>
                <span class="axis az">Z</span>
                <div class="cube"><div>TOP</div></div>
                <span class="axis ay">Y</span>

                <div class="palette">
                    <div class="phead">
                        <svg width="12" height="12" viewBox="0 0 12 12"><circle cx="6" cy="6" r="6" fill="#333"/><rect x="2.5" y="5" width="7" height="2" fill="#f0f0f0"/></svg>
                        <span>SKETCH PALETTE</span>
                        <svg class="end" width="12" height="8" viewBox="0 0 12 8"><path d="M0 0L6 4L0 8ZM6 0L12 4L6 8Z" fill="#333"/></svg>
                    </div>
                    <div class="opts"><div class="caret"></div>Options</div>
                    <div class="prow">
                        <span>Linetype</span>
                        <svg class="nudge" width="20" height="20" viewBox="0 0 20 20"><path d="M18 1L2 10L18 19" fill="none" stroke="#aaa"/><path d="M0 10H20M15 0V20" stroke="#efb68c" stroke-dasharray="3 2" fill="none"/></svg>
                        <svg width="20" height="20" viewBox="0 0 20 20"><path d="M5 1H14L15 5H19V15L15 15V19H5L1 16V4Z" fill="none" stroke="#c4c4c4"/><path d="M0 10H20" stroke="#efc6a8" stroke-dasharray="3 2"/></svg>
                    </div>
                    <div class="prow">
                        <span>Look At</span>
                        <svg class="nudge" width="18" height="17" viewBox="0 0 18 17"><rect x=".5" y="4.5" width="17" height="12" fill="#dfe3e8" stroke="#667"/><rect x="2.5" y="7.5" width="13" height="7" fill="#8b95a6"/><path d="M1 4L4 0L7 3L12 1.5L16 2V4Z" fill="#667"/></svg>
                    </div>
                    ${PALETTE.map(
                        ([name, on]) => html`<div class="prow">
                            <span>${name}</span>
                            <svg width="16" height="16" viewBox="0 0 16 16">
                                <defs>
                                    <linearGradient id="cbon" x1="0" y1="0" x2="1" y2="1"><stop offset="0" stop-color="#d6d6d6"/><stop offset="1" stop-color="#9a9a9a"/></linearGradient>
                                    <linearGradient id="cboff" x1="0" y1="0" x2="0" y2="1"><stop offset="0" stop-color="#f8f8f8"/><stop offset="1" stop-color="#c4c4c4"/></linearGradient>
                                </defs>
                                <rect x=".7" y=".7" width="14.6" height="14.6" rx="3" fill=${on ? 'url(#cbon)' : 'url(#cboff)'} stroke=${on ? '#555' : '#888'} stroke-width="1.3"/>
                                ${on ? svg`<path d="M3.5 8.5L6.5 12.5L12 3" fill="none" stroke="#000" stroke-width="1.5"/>` : ''}
                            </svg>
                        </div>`
                    )}
                    <div class="pfoot"><div>Finish Sketch</div></div>
                </div>

                <div class="nav">
                    <svg width="19" height="20" viewBox="0 0 19 20"><path d="M9.5 0L14 6H11.5V19H7.5V6H5Z" fill="#fff" stroke="#333"/><ellipse cx="9.5" cy="12" rx="8.5" ry="3.6" fill="none" stroke="#333"/></svg>
                    <div class="caret"></div>
                    <svg width="18" height="19" viewBox="0 0 18 19"><rect x=".5" y="5.5" width="17" height="13" fill="#dde0e4" stroke="#667"/><rect x="3" y="9" width="12" height="7" fill="#7f8a9a"/><path d="M1 5L4 1L7 3.5L12 2L16 2.5V5Z" fill="#667"/></svg>
                    <svg width="20" height="20" viewBox="0 0 20 20"><path d="M5 19C3 15 1 11 1 9.5C2 8 4 10 5 12V3.5A1.2 1.2 0 0 1 7.5 3.5V9V2A1.2 1.2 0 0 1 10 2V9V2.5A1.2 1.2 0 0 1 12.5 2.5V9.5V5A1.2 1.2 0 0 1 15 5V13C15 16 14 18 13 19Z" fill="#fff" stroke="#222"/></svg>
                    <svg width="21" height="20" viewBox="0 0 21 20"><circle cx="8" cy="9" r="6.5" fill="#d3ecee" stroke="#444" stroke-width="1.4"/><path d="M13 14L19 20" stroke="#222" stroke-width="2.6"/><path d="M14 1.5H20M17 0V3M15 7H20" stroke="#444"/></svg>
                    <svg width="20" height="20" viewBox="0 0 20 20"><rect x=".5" y=".5" width="19" height="18.5" fill="none" stroke="#999" stroke-dasharray="2 2"/><circle cx="8" cy="8" r="6.5" fill="#d3ecee" stroke="#444" stroke-width="1.4"/><path d="M13 13L19 19.5" stroke="#222" stroke-width="2.6"/></svg>
                    <div class="caret"></div>
                    <svg width="18" height="22" viewBox="0 0 18 22"><rect x=".5" y=".5" width="17" height="15" fill="#90a7c8" stroke="#555"/><path d="M6 16H12V19H6ZM3 19H15V21H3Z" fill="#8a8a8a"/></svg>
                    <div class="caret"></div>
                    <svg width="18" height="21" viewBox="0 0 18 21"><rect width="18" height="21" fill="#a8aab0"/><path d="M0 3.5H18M0 7H18M0 10.5H18M0 14H18M0 17.5H18M3.5 0V21M7 0V21M10.5 0V21M14 0V21" stroke="#555" stroke-width=".7"/></svg>
                    <div class="caret"></div>
                    <svg width="18" height="19" viewBox="0 0 18 19"><rect x=".7" y=".7" width="16.6" height="17.6" fill="#8ca6cc" stroke="#33415c" stroke-width="1.4"/><path d="M9 0V19M0 9.5H18" stroke="#33415c" stroke-width="1.4"/></svg>
                    <div class="caret"></div>
                </div>

                <svg class="drop" width="20" height="20" viewBox="0 0 20 20"><path d="M10 0A10 10 0 0 1 19.5 10V17A3 3 0 0 1 16.5 20H10A10 10 0 0 1 10 0Z" fill="#000"/><path d="M4 13L12 6M6 15L15 7M9 15L15 10" stroke="#ddd" stroke-width="1.2"/></svg>
            </div>

            <div class="timeline">
                <div class="transport">
                    <svg width="15" height="20" viewBox="0 0 15 20"><rect width="2.5" height="18" y="1" fill="#555"/><path d="M15 1V19L3 10Z" fill="#555"/></svg>
                    <svg width="17" height="20" viewBox="0 0 17 20"><path d="M13 2V18L0 10Z" fill="#555"/><rect x="14.5" y="6" width="2.5" height="8" fill="#555"/></svg>
                    <svg width="15" height="20" viewBox="0 0 15 20"><path d="M0 0V20L15 10Z" fill="#555"/></svg>
                    <svg width="17" height="20" viewBox="0 0 17 20"><path d="M4 2V18L17 10Z" fill="#555"/><rect y="6" width="2.5" height="8" fill="#555"/></svg>
                    <svg width="15" height="20" viewBox="0 0 15 20"><rect width="2.5" height="18" x="12.5" y="1" fill="#555"/><path d="M0 1V19L12 10Z" fill="#555"/></svg>
                </div>
                <div class="track">
                    ${[...SEQ].map((k, i) => {
                        const cls = i < 19 ? '' : i >= 38 && i < 46 ? 'greyed' : 'faded';
                        return html`<div class="item ${cls}">
                            <svg width="24" height="22" viewBox="0 0 24 22">${tlIcon(k)}</svg>
                            <div class="tick"></div>
                            <div class="rail"></div>
                        </div>`;
                    })}
                </div>
                <div class="playhead">
                    <svg width="15" height="11" viewBox="0 0 15 11"><path d="M0 0H15V6L7.5 11L0 6Z" fill="#555"/></svg>
                    <i></i>
                </div>
                <svg class="gear" width="20" height="20" viewBox="0 0 20 20"><circle cx="10" cy="10" r="5.5" fill="none" stroke="#666" stroke-width="4"/><circle cx="10" cy="10" r="8.6" fill="none" stroke="#666" stroke-width="2.8" stroke-dasharray="3.4 3.35"/></svg>
            </div>
        `;
    }
}
